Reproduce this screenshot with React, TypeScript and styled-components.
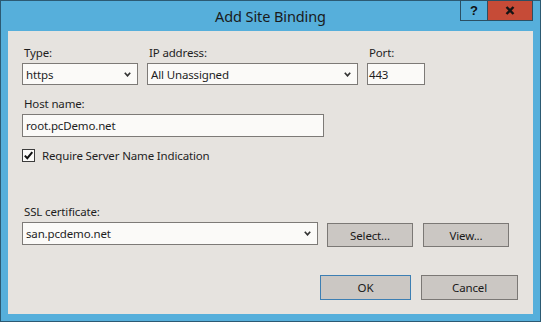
import styled, { createGlobalStyle } from "styled-components";

const GlobalStyle = createGlobalStyle`
  html, body {
    margin: 0;
    padding: 0;
    background: #ffffff;
  }
  * {
    box-sizing: border-box;
  }
`;

const Window = styled.div`
  width: 541px;
  height: 322px;
  display: flex;
  flex-direction: column;
  padding: 0 7px 7px;
  background: #56afdb;
  border: 1px solid #2c5a73;
  font-family: "Noto Sans", "Open Sans", sans-serif;
  font-size: 11.5px;
  letter-spacing: -0.15px;
  color: #1e1e1e;
`;

const TitleBar = styled.div`
  position: relative;
  height: 30px;
  display: flex;
  align-items: center;
  justify-content: center;
  font-size: 14.5px;
  letter-spacing: -0.1px;
  line-height: 30px;
  color: #1a1a1a;
`;

const CaptionButtons = styled.div`
  position: absolute;
  top: -1px;
  right: 0;
  display: flex;
`;

const CaptionButton = styled.div<{ $close?: boolean }>`
  width: ${({ $close }) => ($close ? "45px" : "28px")};
  height: 21px;
  display: flex;
  align-items: center;
  justify-content: center;
  background: ${({ $close }) => ($close ? "#c64b37" : "#56afdb")};
  border: 1px solid #2b4f63;
  border-left-width: ${({ $close }) => ($close ? "0" : "1px")};
  font-family: "Liberation Sans", Arial, sans-serif;
  font-weight: bold;
  font-size: 13px;
  color: #111;
`;

const Client = styled.div`
  flex: 1;
  display: flex;
  flex-direction: column;
  padding: 14px 15px 14px 14px;
  background: #e6e3df;
`;

const Row = styled.div<{ $gap?: number; $top?: number }>`
  display: flex;
  align-items: flex-start;
  gap: ${({ $gap }) => $gap ?? 9}px;
  margin-top: ${({ $top }) => $top ?? 0}px;
`;

const Field = styled.div<{ $width: number }>`
  width: ${({ $width }) => $width}px;
  display: flex;
  flex-direction: column;
  gap: 3px;
`;

const Label = styled.div<{ $top?: number }>`
  line-height: 15px;
  padding-left: 2px;
  margin-top: ${({ $top }) => $top ?? 0}px;
  white-space: nowrap;
`;

const TextBox = styled.div<{ $width?: number; $height?: number; $pad?: number }>`
  width: ${({ $width }) => ($width ? `${$width}px` : "auto")};
  height: ${({ $height }) => $height ?? 22}px;
  display: flex;
  align-items: center;
  justify-content: space-between;
  padding: 0 6px 0 ${({ $pad }) => $pad ?? 3}px;
  background: #fbfaf8;
  border: 1px solid #7d7a77;
  white-space: nowrap;
`;

const Chevron = () => (
  <svg width="7" height="5" viewBox="0 0 7 5">
    <path d="M0.8 0.8 L3.5 3.8 L6.2 0.8" fill="none" stroke="#333" strokeWidth="1.7" />
  </svg>
);

const CheckRow = styled.label`
  display: flex;
  align-items: center;
  gap: 7px;
  margin-top: 12px;
  height: 13px;
  line-height: 13px;
`;

const CheckBox = styled.span`
  width: 13px;
  height: 13px;
  display: flex;
  align-items: center;
  justify-content: center;
  background: #fbfaf8;
  border: 1px solid #3c3c3c;
`;

const ButtonGroup = styled.div<{ $top?: number }>`
  display: flex;
  gap: 10px;
  margin-top: ${({ $top }) => $top ?? 0}px;
`;

const Button = styled.div<{ $width: number; $height?: number; $default?: boolean }>`
  width: ${({ $width }) => $width}px;
  height: ${({ $height }) => $height ?? 24}px;
  display: flex;
  align-items: center;
  justify-content: center;
  background: #cbc7c3;
  border: 1px solid ${({ $default }) => ($default ? "#3d7fb3" : "#7b7875")};
  color: #1a1a1a;
`;

const Footer = styled.div`
  margin-top: auto;
  display: flex;
  justify-content: flex-end;
  gap: 10px;
`;

export default function App() {
  return (
    <>
      <GlobalStyle />
      <Window>
        <TitleBar>
          Add Site Binding
          <CaptionButtons>
            <CaptionButton>?</CaptionButton>
            <CaptionButton $close>
              <svg width="10" height="9" viewBox="0 0 10 9">
                <path d="M1.5 1 L8.5 8 M8.5 1 L1.5 8" stroke="#141414" strokeWidth="2.4" />
              </svg>
            </CaptionButton>
          </CaptionButtons>
        </TitleBar>
        <Client>
          <Row $gap={9}>
            <Field $width={116}>
              <Label>Type:</Label>
              <TextBox>
                https
                <Chevron />
              </TextBox>
            </Field>
            <Field $width={211}>
              <Label>IP address:</Label>
              <TextBox>
                All Unassigned
                <Chevron />
              </TextBox>
            </Field>
            <Field $width={58}>
              <Label>Port:</Label>
              <TextBox $pad={1}>443</TextBox>
            </Field>
          </Row>

          <Row $top={11}>
            <Field $width={302}>
              <Label>Host name:</Label>
              <TextBox $height={23}>root.pcDemo.net</TextBox>
            </Field>
          </Row>

          <CheckRow>
            <CheckBox>
              <svg width="11" height="11" viewBox="0 0 11 11">
                <path d="M1.8 5.6 L4.3 8.2 L9.3 2.2" fill="none" stroke="#111" strokeWidth="2" />
              </svg>
            </CheckBox>
            Require Server Name Indication
          </CheckRow>

          <Label $top={42}>SSL certificate:</Label>
          <Row $gap={9} $top={3}>
            <TextBox $width={296} $height={23}>
              san.pcdemo.net
              <Chevron />
            </TextBox>
            <ButtonGroup $top={1}>
              <Button $width={86}>Select...</Button>
              <Button $width={86}>View...</Button>
            </ButtonGroup>
          </Row>

          <Footer>
            <Button $width={91} $height={25} $default>
              OK
            </Button>
            <Button $width={97} $height={25}>
              Cancel
            </Button>
          </Footer>
        </Client>
      </Window>
    </>
  );
}
